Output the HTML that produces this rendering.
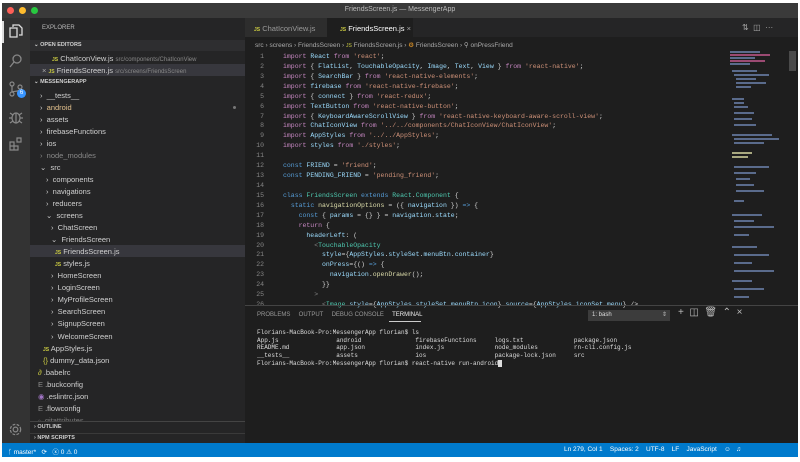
<!DOCTYPE html>
<html><head><meta charset="utf-8"><style>
*{margin:0;padding:0;box-sizing:border-box}
body{width:800px;height:462px;background:#fff;position:relative;overflow:hidden;font-family:"Liberation Sans",sans-serif}
.a{position:absolute;white-space:pre}
.mono{font-family:"Liberation Mono",monospace}
#win{position:absolute;left:2px;top:3px;width:796px;height:454px;background:#1e1e1e;overflow:hidden}
.sb{font-size:7.5px;color:#d0d0d0}
.k{color:#c586c0}.s{color:#ce9178}.v{color:#9cdcfe}.b{color:#569cd6}.c{color:#4ec9b0}.f{color:#dcdcaa}.w{color:#d4d4d4}.g{color:#808080}
</style></head><body>
<div id="win">
<div class="a" style="left:0;top:0;width:796px;height:15px;background:#3a3a3a"></div>
<div class="a" style="left:5px;top:4px;width:7px;height:7px;border-radius:50%;background:#fe5f57"></div>
<div class="a" style="left:17px;top:4px;width:7px;height:7px;border-radius:50%;background:#febc2e"></div>
<div class="a" style="left:29px;top:4px;width:7px;height:7px;border-radius:50%;background:#28c840"></div>
<div class="a" style="left:0;top:3px;width:796px;text-align:center;font-size:7px;color:#bbb">FriendsScreen.js — MessengerApp</div>
<div class="a" style="left:0;top:15px;width:28px;height:425px;background:#333"></div>
<div class="a" style="left:0;top:18px;width:2px;height:22px;background:#ddd"></div>
<svg class="a" style="left:6px;top:20px" width="16" height="16" viewBox="0 0 16 16" fill="none" stroke="#ddd" stroke-width="1.3"><path d="M5 4V2h6l3 3v7h-3M2 5h7v9H2z"/></svg>
<svg class="a" style="left:6px;top:50px" width="16" height="16" viewBox="0 0 16 16" fill="none" stroke="#888" stroke-width="1.3"><circle cx="9" cy="6" r="4"/><path d="M6 9l-4 5"/></svg>
<svg class="a" style="left:6px;top:78px" width="16" height="16" viewBox="0 0 16 16" fill="none" stroke="#888" stroke-width="1.2"><circle cx="4" cy="3" r="2"/><circle cx="4" cy="13" r="2"/><circle cx="12" cy="6" r="2"/><path d="M4 5v6M12 8c0 3-8 2-8 3"/></svg>
<div class="a" style="left:15px;top:86px;width:9px;height:9px;border-radius:50%;background:#3794ff;font-size:6px;color:#fff;text-align:center;line-height:9px">6</div>
<svg class="a" style="left:6px;top:106px" width="16" height="16" viewBox="0 0 16 16" fill="none" stroke="#888" stroke-width="1.2"><ellipse cx="8" cy="9" rx="4" ry="5"/><path d="M1 9h3M12 9h3M2 4l3 2M14 4l-3 2M2 14l3-2M14 14l-3-2M8 4v10"/></svg>
<svg class="a" style="left:6px;top:133px" width="16" height="16" viewBox="0 0 16 16" fill="none" stroke="#888" stroke-width="1.2"><path d="M2 6h4v4H2zM6 10h4v4H6zM2 10h4v4H2zM9 2h4v4H9z"/></svg>
<svg class="a" style="left:6px;top:419px" width="15" height="15" viewBox="0 0 16 16" fill="none" stroke="#888" stroke-width="1.3"><circle cx="8" cy="8" r="2.5"/><circle cx="8" cy="8" r="5.5" stroke-dasharray="3 1.5"/></svg>
<div class="a" style="left:28px;top:15px;width:215px;height:425px;background:#252526"></div>
<div class="a sb" style="left:40px;top:22px;font-size:6px;color:#bbb">EXPLORER</div>
<div class="a" style="left:28px;top:37px;width:215px;height:11px;background:#2e2e30"></div>
<div class="a sb" style="left:32px;top:39px;font-size:5.5px;font-weight:bold">⌄ OPEN EDITORS</div>
<div class="a sb" style="left:50px;top:51px"><span style="color:#cbcb41;font-size:5px;font-weight:bold">JS</span> ChatIconView.js <span style="color:#888;font-size:6px">src/components/ChatIconView</span></div>
<div class="a" style="left:28px;top:61px;width:215px;height:12px;background:#37373d"></div>
<div class="a sb" style="left:40px;top:63px"><span style="color:#aaa">×</span> <span style="color:#cbcb41;font-size:5px;font-weight:bold">JS</span> FriendsScreen.js <span style="color:#888;font-size:6px">src/screens/FriendsScreen</span></div>
<div class="a sb" style="left:32px;top:76px;font-size:5.5px;font-weight:bold">⌄ MESSENGERAPP</div>
<div class="a sb" style="left:38px;top:88px">›  __tests__</div>
<div class="a sb" style="left:38px;top:100px">›  <span style="color:#e2c08d">android</span></div>
<div class="a" style="left:231px;top:103px;width:3px;height:3px;border-radius:50%;background:#777"></div>
<div class="a sb" style="left:38px;top:112px">›  assets</div>
<div class="a sb" style="left:38px;top:124px">›  firebaseFunctions</div>
<div class="a sb" style="left:38px;top:136px">›  ios</div>
<div class="a sb" style="left:38px;top:148px;color:#888">›  node_modules</div>
<div class="a sb" style="left:38px;top:160px">⌄  src</div>
<div class="a sb" style="left:44px;top:172px">›  components</div>
<div class="a sb" style="left:44px;top:184px">›  navigations</div>
<div class="a sb" style="left:44px;top:196px">›  reducers</div>
<div class="a sb" style="left:44px;top:208px">⌄  screens</div>
<div class="a sb" style="left:49px;top:220px">›  ChatScreen</div>
<div class="a sb" style="left:49px;top:232px">⌄  FriendsScreen</div>
<div class="a" style="left:28px;top:242px;width:215px;height:12px;background:#37373d"></div>
<div class="a sb" style="left:53px;top:244px"><span style="color:#cbcb41;font-size:5px;font-weight:bold">JS</span> FriendsScreen.js</div>
<div class="a sb" style="left:53px;top:256px"><span style="color:#cbcb41;font-size:5px;font-weight:bold">JS</span> styles.js</div>
<div class="a sb" style="left:49px;top:268px">›  HomeScreen</div>
<div class="a sb" style="left:49px;top:280px">›  LoginScreen</div>
<div class="a sb" style="left:49px;top:292px">›  MyProfileScreen</div>
<div class="a sb" style="left:49px;top:304px">›  SearchScreen</div>
<div class="a sb" style="left:49px;top:316px">›  SignupScreen</div>
<div class="a sb" style="left:49px;top:329px">›  WelcomeScreen</div>
<div class="a sb" style="left:41px;top:341px"><span style="color:#cbcb41;font-size:5px;font-weight:bold">JS</span> AppStyles.js</div>
<div class="a sb" style="left:41px;top:353px"><span style="color:#cbcb41">{}</span> dummy_data.json</div>
<div class="a sb" style="left:36px;top:365px"><span style="color:#cbcb41">∂</span> .babelrc</div>
<div class="a sb" style="left:36px;top:377px"><span style="color:#888">E</span> .buckconfig</div>
<div class="a sb" style="left:36px;top:389px"><span style="color:#a074c4">◉</span> .eslintrc.json</div>
<div class="a sb" style="left:36px;top:401px"><span style="color:#888">E</span> .flowconfig</div>
<div class="a sb" style="left:36px;top:413px;color:#777">◦ .gitattributes</div>
<div class="a" style="left:28px;top:418px;width:215px;height:22px;background:#252526;border-top:1px solid #444"></div>
<div class="a sb" style="left:32px;top:421px;font-size:5.5px;font-weight:bold">› OUTLINE</div>
<div class="a" style="left:28px;top:430px;width:215px;height:1px;background:#3a3a3a"></div>
<div class="a sb" style="left:32px;top:432px;font-size:5.5px;font-weight:bold">› NPM SCRIPTS</div>
<div class="a" style="left:243px;top:15px;width:553px;height:19px;background:#252526"></div>
<div class="a" style="left:243px;top:15px;width:82px;height:19px;background:#2d2d2d"></div>
<div class="a sb" style="left:252px;top:21px;color:#999"><span style="color:#cbcb41;font-size:5px;font-weight:bold">JS</span> ChatIconView.js</div>
<div class="a" style="left:325px;top:15px;width:86px;height:19px;background:#1e1e1e"></div>
<div class="a sb" style="left:338px;top:21px;color:#fff"><span style="color:#cbcb41;font-size:5px;font-weight:bold">JS</span> FriendsScreen.js <span style="color:#aaa">×</span></div>
<div class="a" style="left:740px;top:20px;font-size:8px;color:#aaa">⇅ &nbsp;◫ &nbsp;···</div>
<div class="a sb" style="left:253px;top:38px;color:#aaa;font-size:6.5px">src › screens › FriendsScreen › <span style="color:#cbcb41;font-size:5px">JS</span> FriendsScreen.js › <span style="color:#ee9d28">⚙</span> FriendsScreen › <span style="color:#aaa">⚲</span> onPressFriend</div>
<div class="a mono" style="left:243px;top:49px;width:19px;font-size:6.5px;line-height:9.92px;color:#858585;text-align:right">1
2
3
4
5
6
7
8
9
10
11
12
13
14
15
16
17
18
19
20
21
22
23
24
25
26</div>
<div class="a mono w" style="left:281px;top:49px;font-size:6.5px;line-height:9.92px"><span class="k">import</span> <span class="v">React</span> <span class="k">from</span> <span class="s">'react'</span>;
<span class="k">import</span> { <span class="v">FlatList</span>, <span class="v">TouchableOpacity</span>, <span class="v">Image</span>, <span class="v">Text</span>, <span class="v">View</span> } <span class="k">from</span> <span class="s">'react-native'</span>;
<span class="k">import</span> { <span class="v">SearchBar</span> } <span class="k">from</span> <span class="s">'react-native-elements'</span>;
<span class="k">import</span> <span class="v">firebase</span> <span class="k">from</span> <span class="s">'react-native-firebase'</span>;
<span class="k">import</span> { <span class="v">connect</span> } <span class="k">from</span> <span class="s">'react-redux'</span>;
<span class="k">import</span> <span class="v">TextButton</span> <span class="k">from</span> <span class="s">'react-native-button'</span>;
<span class="k">import</span> { <span class="v">KeyboardAwareScrollView</span> } <span class="k">from</span> <span class="s">'react-native-keyboard-aware-scroll-view'</span>;
<span class="k">import</span> <span class="v">ChatIconView</span> <span class="k">from</span> <span class="s">'../../components/ChatIconView/ChatIconView'</span>;
<span class="k">import</span> <span class="v">AppStyles</span> <span class="k">from</span> <span class="s">'../../AppStyles'</span>;
<span class="k">import</span> <span class="v">styles</span> <span class="k">from</span> <span class="s">'./styles'</span>;

<span class="b">const</span> <span class="v">FRIEND</span> = <span class="s">'friend'</span>;
<span class="b">const</span> <span class="v">PENDING_FRIEND</span> = <span class="s">'pending_friend'</span>;

<span class="b">class</span> <span class="c">FriendsScreen</span> <span class="b">extends</span> <span class="c">React</span>.<span class="c">Component</span> {
  <span class="b">static</span> <span class="f">navigationOptions</span> = ({ <span class="v">navigation</span> }) <span class="b">=&gt;</span> {
    <span class="b">const</span> { <span class="v">params</span> = {} } = <span class="v">navigation</span>.<span class="v">state</span>;
    <span class="k">return</span> {
      <span class="v">headerLeft</span>: (
        <span class="g">&lt;</span><span class="c">TouchableOpacity</span>
          <span class="v">style</span>={<span class="v">AppStyles</span>.<span class="v">styleSet</span>.<span class="v">menuBtn</span>.<span class="v">container</span>}
          <span class="v">onPress</span>={() <span class="b">=&gt;</span> {
            <span class="v">navigation</span>.<span class="f">openDrawer</span>();
          }}
        <span class="g">&gt;</span>
          <span class="g">&lt;</span><span class="c">Image</span> <span class="v">style</span>={<span class="v">AppStyles</span>.<span class="v">styleSet</span>.<span class="v">menuBtn</span>.<span class="v">icon</span>} <span class="v">source</span>={<span class="v">AppStyles</span>.<span class="v">iconSet</span>.<span class="v">menu</span>} /&gt;</div>
<svg class="a" style="left:725px;top:45px" width="60" height="260">
<g fill="#6a7fa8" opacity=".8">
<rect x="3" y="3" width="30" height="2"/><rect x="3" y="6" width="40" height="2" fill="#b58"/><rect x="3" y="9" width="25" height="2"/><rect x="3" y="12" width="35" height="2" fill="#b58"/><rect x="3" y="15" width="20" height="2"/>
<rect x="5" y="22" width="25" height="2"/><rect x="7" y="26" width="35" height="2"/><rect x="9" y="30" width="20" height="2"/><rect x="9" y="34" width="30" height="2"/><rect x="9" y="38" width="15" height="2"/>
<rect x="5" y="50" width="12" height="2"/><rect x="7" y="54" width="10" height="2"/><rect x="7" y="58" width="14" height="2"/><rect x="7" y="64" width="20" height="2"/><rect x="7" y="70" width="18" height="2"/><rect x="7" y="76" width="22" height="2"/>
<rect x="5" y="86" width="40" height="2"/><rect x="7" y="90" width="45" height="2"/><rect x="7" y="94" width="30" height="2"/><rect x="5" y="104" width="20" height="2" fill="#cc9"/><rect x="5" y="108" width="16" height="2" fill="#cc9"/>
<rect x="7" y="118" width="35" height="2"/><rect x="7" y="124" width="22" height="2"/><rect x="9" y="130" width="14" height="2"/><rect x="9" y="136" width="18" height="2"/><rect x="9" y="142" width="28" height="2"/>
<rect x="7" y="152" width="10" height="2"/><rect x="5" y="166" width="30" height="2"/><rect x="7" y="172" width="20" height="2"/><rect x="7" y="178" width="40" height="2"/><rect x="7" y="186" width="15" height="2"/>
<rect x="5" y="198" width="25" height="2"/><rect x="7" y="206" width="35" height="2"/><rect x="7" y="214" width="18" height="2"/><rect x="7" y="222" width="40" height="2"/><rect x="5" y="232" width="20" height="2"/><rect x="7" y="240" width="30" height="2"/><rect x="7" y="248" width="15" height="2"/>
</g></svg>
<div class="a" style="left:787px;top:48px;width:7px;height:20px;background:#4a4a4a"></div>
<div class="a" style="left:243px;top:302px;width:553px;height:1px;background:#444"></div>
<div class="a" style="left:255px;top:309px;font-size:6px;color:#999">PROBLEMS &nbsp;&nbsp;&nbsp; OUTPUT &nbsp;&nbsp;&nbsp; DEBUG CONSOLE &nbsp;&nbsp;&nbsp; <span style="color:#eee">TERMINAL</span></div>
<div class="a" style="left:387px;top:318px;width:32px;height:1px;background:#ccc"></div>
<div class="a" style="left:586px;top:307px;width:82px;height:11px;background:#3c3c3c"></div>
<div class="a" style="left:590px;top:309px;font-size:6px;color:#ddd">1: bash</div>
<div class="a" style="left:660px;top:308px;font-size:6px;color:#bbb">⇕</div>
<div class="a" style="left:676px;top:304px;font-size:10px;color:#bbb">+ &nbsp;◫ &nbsp;🗑︎ &nbsp;⌃ &nbsp;×</div>
<div class="a mono" style="left:255px;top:326px;font-size:6px;line-height:7.7px;color:#ddd">Florians-MacBook-Pro:MessengerApp florian$ ls
App.js                android               firebaseFunctions     logs.txt              package.json
README.md             app.json              index.js              node_modules          rn-cli.config.js
__tests__             assets                ios                   package-lock.json     src
Florians-MacBook-Pro:MessengerApp florian$ react-native run-android<span style="background:#ddd">&nbsp;</span></div>
<div class="a" style="left:0;top:440px;width:796px;height:14px;background:#007acc"></div>
<div class="a" style="left:6px;top:443px;font-size:6.5px;color:#fff">ᚴ master* &nbsp;&nbsp;⟳ &nbsp;&nbsp;ⓧ 0 ⚠ 0</div>
<div class="a" style="left:562px;top:443px;font-size:6.5px;color:#fff">Ln 279, Col 1 &nbsp;&nbsp; Spaces: 2 &nbsp;&nbsp; UTF-8 &nbsp;&nbsp; LF &nbsp;&nbsp; JavaScript &nbsp;&nbsp; ☺ &nbsp; ♫</div>
</div>
</body></html>
